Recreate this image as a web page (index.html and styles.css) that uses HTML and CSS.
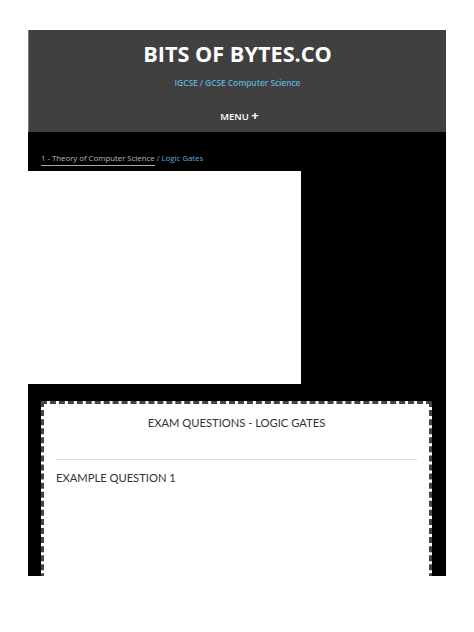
FILE: index.html
```html
<!DOCTYPE html>
<html>
<head>
<meta charset="utf-8">
<link rel="stylesheet" href="styles.css">
</head>
<body>
<div class="page">
  <header class="site-header">
    <h1 class="site-title">BITS OF BYTES.CO</h1>
    <p class="site-tagline">IGCSE / GCSE Computer Science</p>
    <div class="menu">MENU <span class="plus">+</span></div>
  </header>
  <main class="main">
    <nav class="breadcrumb"><a class="crumb-link">1 - Theory of Computer Science</a> <span class="crumb-current">/ Logic Gates</span></nav>
    <div class="embed"></div>
    <section class="card">
      <h2 class="card-title">EXAM QUESTIONS - LOGIC GATES</h2>
      <hr class="divider">
      <h3 class="question">EXAMPLE QUESTION 1</h3>
    </section>
  </main>
</div>
</body>
</html>
```
FILE: styles.css
```css
* { box-sizing: border-box; }
html, body { margin: 0; padding: 0; background: #fff; }
body { font-family: "Open Sans", "DejaVu Sans", sans-serif; }
.page {
  width: 418px;
  margin: 30px 0 0 28px;
}
.site-header {
  background: #404040;
  height: 102px;
  border-left: 1px solid #777;
  display: flex;
  flex-direction: column;
  align-items: center;
  padding-top: 10px;
}
.site-title {
  margin: 0;
  color: #fff;
  font-size: 21.7px;
  font-weight: 700;
  line-height: 28px;
}
.site-tagline {
  margin: 9px 0 0;
  color: #5cb0d6;
  font-size: 8.5px;
  font-weight: 600;
  letter-spacing: -0.1px;
  line-height: 12px;
}
.menu {
  margin-top: 20px;
  padding-left: 4px;
  color: #fff;
  font-size: 9.5px;
  font-weight: 600;
  line-height: 12px;
}
.plus { font-size: 13px; font-weight: 700; }
.main {
  background: #000;
  height: 444px;
  overflow: hidden;
  padding-top: 20px;
}
.breadcrumb {
  padding-left: 13px;
  font-size: 7.8px;
  line-height: 12px;
  height: 19px;
  color: #bbb;
}
.crumb-link {
  color: #bbb;
  border-bottom: 1px solid #aaa;
  padding-bottom: 2px;
}
.crumb-current { color: #5cb0d6; }
.embed {
  width: 273px;
  height: 213px;
  background: #fff;
}
.card {
  margin: 17px 14px 0 13px;
  background: #fff;
  border: 3px dashed #444;
  height: 260px;
  padding: 0 12px;
  font-family: "Lato", "Open Sans", sans-serif;
  color: #333;
}
.card-title {
  margin: 0;
  padding-top: 11px;
  text-align: center;
  font-size: 11.2px;
  font-weight: 400;
  line-height: 16px;
}
.divider {
  margin: 28px 0 0;
  border: 0;
  border-top: 1px solid #ddd;
}
.question {
  margin: 10px 0 0;
  font-size: 11.2px;
  font-weight: 400;
  line-height: 16px;
}
```
